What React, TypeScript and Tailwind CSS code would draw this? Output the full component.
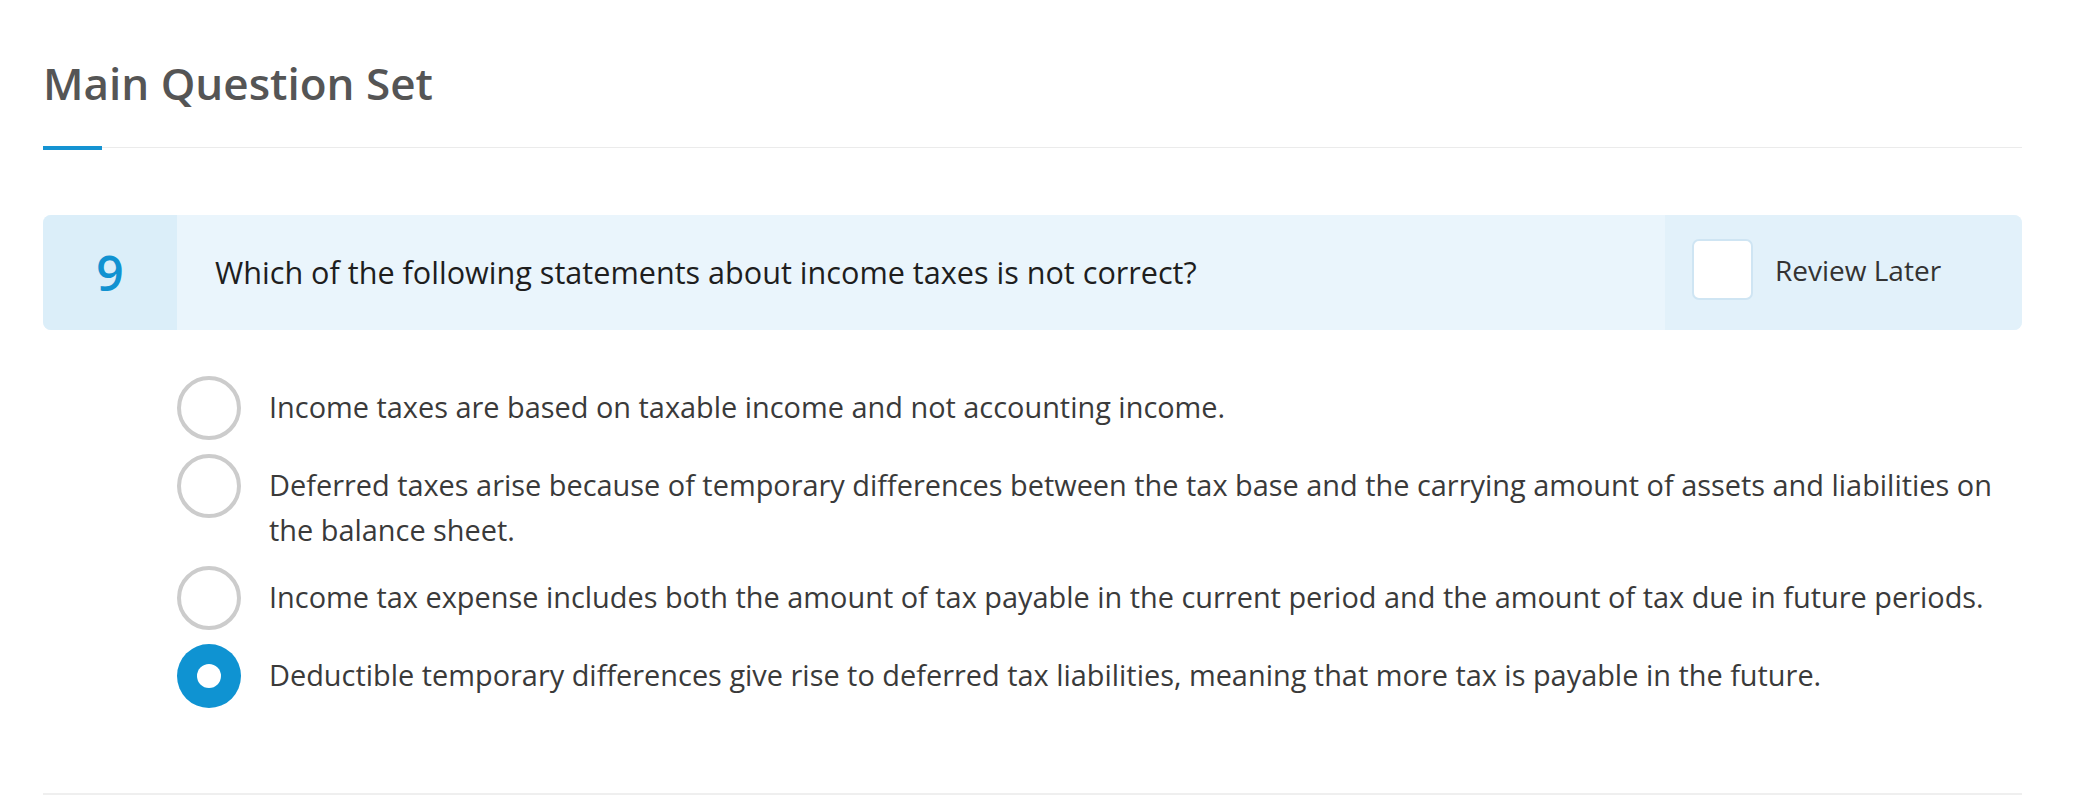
import { useState } from "react";

const options = [
  "Income taxes are based on taxable income and not accounting income.",
  "Deferred taxes arise because of temporary differences between the tax base and the carrying amount of assets and liabilities on the balance sheet.",
  "Income tax expense includes both the amount of tax payable in the current period and the amount of tax due in future periods.",
  "Deductible temporary differences give rise to deferred tax liabilities, meaning that more tax is payable in the future.",
];

export default function App() {
  const [selected, setSelected] = useState(3);
  const [review, setReview] = useState(false);

  return (
    <main
      className="min-h-screen bg-white pl-[43px] pt-[60px]"
      style={{ fontFamily: '"Open Sans", "Liberation Sans", sans-serif' }}
    >
      <div className="w-[1979px]">
        <h1 className="text-[44px] leading-[46px] font-semibold text-[#555555]">
          Main Question Set
        </h1>
        <div className="relative mt-[41px] h-px bg-[#ebebeb]">
          <div className="absolute left-0 -top-[1px] h-[4px] w-[59px] bg-[#1593d2]" />
        </div>

        {/* question header */}
        <div className="mt-[67px] flex h-[115px] overflow-hidden rounded-[8px] bg-[#eaf5fc]">
          <div className="flex w-[134px] items-center justify-center bg-[#dbeef9] text-[48px] font-semibold text-[#1192d1]">
            9
          </div>
          <div className="flex flex-1 items-center pl-[38px] text-[30.6px] text-[#1e1e1e]">
            Which of the following statements about income taxes is not correct?
          </div>
          <label className="flex w-[357px] cursor-pointer items-center bg-[#e2f1fa] pb-[6px] pl-[27px]">
            <input
              type="checkbox"
              className="hidden"
              checked={review}
              onChange={() => setReview(!review)}
            />
            <span className="h-[61px] w-[61px] rounded-[7px] border-2 border-[#cfe5f3] bg-white" />
            <span className="ml-[22px] text-[28px] text-[#333333]">
              Review Later
            </span>
          </label>
        </div>

        {/* answers */}
        <div className="mt-[46px] flex flex-col gap-[14px] pl-[134px]">
          {options.map((text, i) => (
            <label
              key={i}
              className="flex cursor-pointer items-start"
              onClick={() => setSelected(i)}
            >
              {selected === i ? (
                <span className="flex h-[64px] w-[64px] shrink-0 items-center justify-center rounded-full bg-[#0f93d2]">
                  <span className="h-[24px] w-[24px] rounded-full bg-white" />
                </span>
              ) : (
                <span className="h-[64px] w-[64px] shrink-0 rounded-full border-[4px] border-[#cccccc] bg-white" />
              )}
              <span className="ml-[28px] pt-[8px] text-[28.9px] leading-[45px] text-[#3a3a3a]">
                {text}
              </span>
            </label>
          ))}
        </div>

        <div className="mt-[85px] h-[2px] bg-[#efefef]" />
      </div>
    </main>
  );
}
